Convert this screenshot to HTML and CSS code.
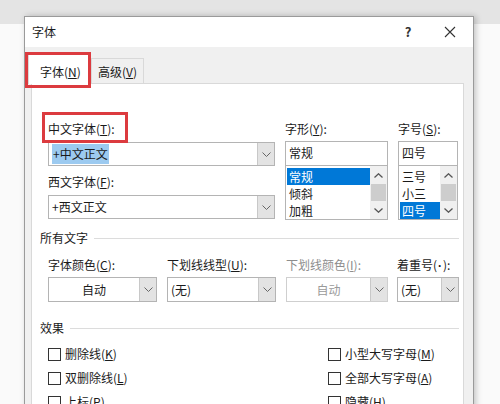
FILE: index.html
```html
<!DOCTYPE html>
<html lang="zh-CN">
<head>
<meta charset="utf-8">
<title>字体</title>
<link rel="stylesheet" href="styles.css">
</head>
<body>
<div class="dialog">
  <div class="titlebar">
    <span class="title">字体</span>
    <span class="help">?</span>
    <span class="close"><svg width="12" height="12" viewBox="0 0 12 12"><path d="M1 1 L11 11 M11 1 L1 11" stroke="#333" stroke-width="1.1" fill="none"/></svg></span>
  </div>
  <div class="body">
    <div class="tabs">
      <div class="tab active marked-tab">字体(<u>N</u>)</div>
      <div class="tab">高级(<u>V</u>)</div>
    </div>
    <div class="panel">
      <div class="top-grid">
        <div class="col">
          <div class="label marked-label">中文字体(<u>T</u>):</div>
          <div class="combo gap5">
            <div class="field"><span class="sel">+中文正文</span></div>
            <div class="arrow"><svg width="9" height="5" viewBox="0 0 9 5"><path d="M0.5 0.5 L4.5 4.5 L8.5 0.5" stroke="#666" fill="none"/></svg></div>
          </div>
          <div class="label gap8">西文字体(<u>F</u>):</div>
          <div class="combo gap5">
            <div class="field">+西文正文</div>
            <div class="arrow"><svg width="9" height="5" viewBox="0 0 9 5"><path d="M0.5 0.5 L4.5 4.5 L8.5 0.5" stroke="#666" fill="none"/></svg></div>
          </div>
        </div>
        <div class="col">
          <div class="label">字形(<u>Y</u>):</div>
          <div class="textbox gap4">常规</div>
          <div class="listbox">
            <div class="items">
              <div class="item selected">常规</div>
              <div class="item">倾斜</div>
              <div class="item">加粗</div>
            </div>
            <div class="scrollbar">
              <div class="sb-btn"><svg width="9" height="5" viewBox="0 0 9 5"><path d="M0.5 4.5 L4.5 0.8 L8.5 4.5" stroke="#555" stroke-width="1.3" fill="none"/></svg></div>
              <div class="thumb"></div>
              <div class="sb-btn"><svg width="9" height="5" viewBox="0 0 9 5"><path d="M0.5 0.5 L4.5 4.2 L8.5 0.5" stroke="#555" stroke-width="1.3" fill="none"/></svg></div>
            </div>
          </div>
        </div>
        <div class="col">
          <div class="label">字号(<u>S</u>):</div>
          <div class="textbox gap4">四号</div>
          <div class="listbox">
            <div class="items">
              <div class="item">三号</div>
              <div class="item">小三</div>
              <div class="item selected">四号</div>
            </div>
            <div class="scrollbar">
              <div class="sb-btn"><svg width="9" height="5" viewBox="0 0 9 5"><path d="M0.5 4.5 L4.5 0.8 L8.5 4.5" stroke="#555" stroke-width="1.3" fill="none"/></svg></div>
              <div class="thumb"></div>
              <div class="sb-btn"><svg width="9" height="5" viewBox="0 0 9 5"><path d="M0.5 0.5 L4.5 4.2 L8.5 0.5" stroke="#555" stroke-width="1.3" fill="none"/></svg></div>
            </div>
          </div>
        </div>
      </div>

      <div class="group-title first"><span>所有文字</span><div class="line"></div></div>

      <div class="row-grid">
        <div class="col">
          <div class="label">字体颜色(<u>C</u>):</div>
          <div class="combo gap4 tall">
            <div class="field center">自动</div>
            <div class="arrow"><svg width="9" height="5" viewBox="0 0 9 5"><path d="M0.5 0.5 L4.5 4.5 L8.5 0.5" stroke="#666" fill="none"/></svg></div>
          </div>
        </div>
        <div class="col">
          <div class="label">下划线线型(<u>U</u>):</div>
          <div class="combo gap4 tall">
            <div class="field">(无)</div>
            <div class="arrow"><svg width="9" height="5" viewBox="0 0 9 5"><path d="M0.5 0.5 L4.5 4.5 L8.5 0.5" stroke="#666" fill="none"/></svg></div>
          </div>
        </div>
        <div class="col disabled">
          <div class="label">下划线颜色(<u>I</u>):</div>
          <div class="combo gap4 tall">
            <div class="field center">自动</div>
            <div class="arrow"><svg width="9" height="5" viewBox="0 0 9 5"><path d="M0.5 0.5 L4.5 4.5 L8.5 0.5" stroke="#666" fill="none"/></svg></div>
          </div>
        </div>
        <div class="col">
          <div class="label">着重号(<span class="dot">·</span>):</div>
          <div class="combo gap4 tall">
            <div class="field">(无)</div>
            <div class="arrow"><svg width="9" height="5" viewBox="0 0 9 5"><path d="M0.5 0.5 L4.5 4.5 L8.5 0.5" stroke="#666" fill="none"/></svg></div>
          </div>
        </div>
      </div>

      <div class="group-title second"><span>效果</span><div class="line"></div></div>

      <div class="checks">
        <label class="check"><span class="box"></span>删除线(<u>K</u>)</label>
        <label class="check"><span class="box"></span>小型大写字母(<u>M</u>)</label>
        <label class="check"><span class="box"></span>双删除线(<u>L</u>)</label>
        <label class="check"><span class="box"></span>全部大写字母(<u>A</u>)</label>
        <label class="check"><span class="box"></span>上标(<u>P</u>)</label>
        <label class="check"><span class="box"></span>隐藏(<u>H</u>)</label>
      </div>
    </div>
  </div>
</div>
</body>
</html>
```

FILE: styles.css
```css
html, body {
  margin: 0;
  padding: 0;
}
body {
  width: 500px;
  height: 404px;
  overflow: hidden;
  background: linear-gradient(to bottom, #e4e4e4 0, #e4e4e4 24px, #fafafa 24px, #fafafa 100%);
  font-family: "Noto Sans CJK SC", "Noto Sans", sans-serif;
  font-size: 12px;
  line-height: 16px;
  color: #1a1a1a;
  padding: 16px 0 0 24px;
  box-sizing: border-box;
}
u { text-decoration: underline; text-underline-offset: 1px; }
.dot { font-family: "Liberation Sans", sans-serif; font-weight: bold; padding: 0 1px; }

.dialog {
  width: 450px;
  height: 420px;
  box-sizing: border-box;
  border: 1px solid #9a9a9a;
  border-bottom: none;
  background: #f0f0f0;
  box-shadow: 2px 0 6px rgba(0,0,0,0.22);
}

.titlebar {
  height: 30px;
  background: #ffffff;
  display: flex;
  align-items: center;
  padding: 0 0 0 7px;
}
.title { flex: 1; font-size: 12px; }
.help { width: 14px; text-align: center; margin-right: 29px; font-size: 13px; font-weight: bold; color: #333; }
.close { width: 12px; height: 12px; margin-right: 17px; display: flex; }

.body { height: 400px; }

.tabs {
  height: 36px;
  display: flex;
  align-items: flex-end;
  padding-left: 3px;
}
.tab {
  height: 25px;
  box-sizing: border-box;
  border: 1px solid #d9d9d9;
  border-bottom: none;
  padding: 5px 6px 0 6px;
  background: #f0f0f0;
  margin-left: -1px;
}
.tab.active {
  height: 32px;
  width: 61px;
  padding: 11px 0 0 11px;
  background: #ffffff;
  margin-bottom: -1px;
  margin-left: 0;
  margin-right: 3px;
  position: relative;
  z-index: 2;
}
.marked-tab::after {
  content: "";
  position: absolute;
  left: -4px;
  top: -1px;
  width: 66px;
  height: 36px;
  box-sizing: border-box;
  border: 3px solid #dc3b3f;
}

.panel {
  margin-left: 6px;
  width: 433px;
  height: 330px;
  box-sizing: border-box;
  background: #ffffff;
  border: 1px solid #d9d9d9;
  padding: 37px 0 0 8px;
  position: relative;
}

.top-grid {
  margin-left: 8px;
  display: grid;
  grid-template-columns: 227px 103px 60px;
  column-gap: 10px;
}
.col { display: flex; flex-direction: column; }
.label { height: 16px; white-space: nowrap; }
.marked-label { position: relative; }
.marked-label::after {
  content: "";
  position: absolute;
  left: -6px;
  top: -9px;
  width: 86px;
  height: 31px;
  box-sizing: border-box;
  border: 3px solid #dc3b3f;
}
.gap4 { margin-top: 4px; }
.gap5 { margin-top: 5px; }
.gap8 { margin-top: 8px; }

.combo {
  height: 24px;
  box-sizing: border-box;
  border: 1px solid #b4b4b4;
  display: flex;
  background: #ffffff;
}
.combo.tall { height: 25px; }
.field {
  flex: 1;
  padding: 3px 0 0 3px;
  white-space: nowrap;
}
.field.center { text-align: center; padding-left: 0; padding-top: 4px; }
.combo.tall .field { padding-top: 4px; }
.sel { background: #9ccaf0; padding: 1px 1px 2px 1px; }
.arrow {
  width: 16px;
  background: #e3e3e3;
  border-left: 1px solid #c8c8c8;
  display: flex;
  align-items: center;
  justify-content: center;
}

.textbox {
  height: 24px;
  box-sizing: border-box;
  border: 1px solid #b4b4b4;
  border-bottom: none;
  padding: 3px 0 0 3px;
}
.listbox {
  height: 55px;
  box-sizing: border-box;
  border: 1px solid #b4b4b4;
  display: flex;
}
.items { flex: 1; padding: 2px 0 0 1px; }
.item { height: 17px; line-height: 17px; padding-left: 2px; }
.item.selected { background: #0078d7; color: #ffffff; }
.scrollbar {
  width: 17px;
  background: #f0f0f0;
  display: flex;
  flex-direction: column;
}
.sb-btn {
  height: 18px;
  display: flex;
  align-items: center;
  justify-content: center;
}
.thumb { height: 17px; background: #cdcdcd; margin: 0 1px; }

.group-title {
  display: flex;
  align-items: center;
  height: 16px;
}
.group-title span { white-space: nowrap; }
.group-title .line {
  flex: 1;
  height: 1px;
  background: #dcdcdc;
  margin: 0 4px 0 6px;
}
.group-title.first { margin-top: 10px; }
.group-title.second { margin-top: 18px; }

.row-grid {
  margin: 11px 0 0 8px;
  display: grid;
  grid-template-columns: 109px 109px 102px 61px;
  column-gap: 10px;
}
.row-grid .col:last-child { margin-left: -1px; }
.disabled { color: #8d8d8d; }
.disabled .combo { border-color: #cfcfcf; }
.disabled .field { color: #9a9a9a; }

.checks {
  margin: 6px 0 0 8px;
  display: grid;
  grid-template-columns: 280px auto;
}
.check {
  height: 24px;
  display: flex;
  align-items: center;
  white-space: nowrap;
}
.box {
  width: 13px;
  height: 13px;
  box-sizing: border-box;
  border: 1px solid #333333;
  background: #ffffff;
  margin-right: 4px;
}
```
